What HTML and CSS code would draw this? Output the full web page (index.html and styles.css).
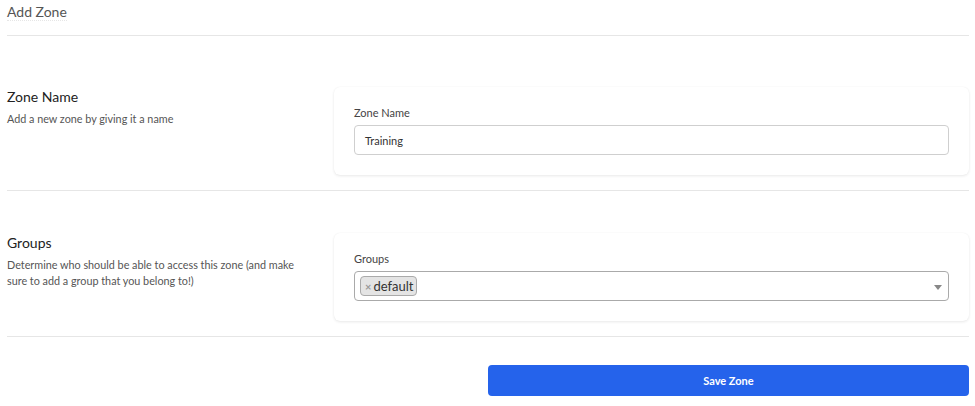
FILE: index.html
```html
<!DOCTYPE html>
<html>
<head>
<meta charset="utf-8">
<link rel="stylesheet" href="styles.css">
</head>
<body>
<div class="page">
  <div class="title-bar"><span class="title">Add Zone</span></div>
  <hr class="sep">
  <section class="row row-first">
    <div class="info">
      <h2 class="heading">Zone Name</h2>
      <p class="desc">Add a new zone by giving it a name</p>
    </div>
    <div class="card">
      <label class="label">Zone Name</label>
      <div class="input">Training</div>
    </div>
  </section>
  <hr class="sep">
  <section class="row">
    <div class="info">
      <h2 class="heading">Groups</h2>
      <p class="desc">Determine who should be able to access this zone (and make sure to add a group that you belong to!)</p>
    </div>
    <div class="card">
      <label class="label">Groups</label>
      <div class="select">
        <span class="tag"><span class="tag-x">×</span>default</span>
        <span class="arrow"></span>
      </div>
    </div>
  </section>
  <hr class="sep">
  <div class="actions">
    <div></div>
    <button class="btn">Save Zone</button>
  </div>
</div>
</body>
</html>
```

FILE: styles.css
```css
html, body {
  margin: 0;
  padding: 0;
  background: #fff;
}
body {
  font-family: Lato, "Open Sans", sans-serif;
  color: #222;
}
.page {
  padding: 0 6px 0 7px;
}
.title-bar {
  height: 35px;
  display: flex;
  align-items: flex-start;
  padding-top: 3px;
  box-sizing: border-box;
}
.title {
  font-size: 14px;
  line-height: 17px;
  color: #555;
  border-bottom: 1px dotted #e6e6e6;
}
.sep {
  border: 0;
  border-top: 1px solid #e6e6e6;
  margin: 0;
}
.row {
  display: grid;
  grid-template-columns: 327px 1fr;
  padding: 42px 0 15px;
}
.row-first {
  padding-top: 51px;
}
.info {
  padding-top: 1px;
}
.heading {
  margin: 0;
  font-size: 14px;
  line-height: 18px;
  font-weight: 400;
  color: #222;
}
.desc {
  margin: 5px 0 0;
  font-size: 10.8px;
  line-height: 16px;
  color: #555;
  max-width: 300px;
}
.card {
  background: #fff;
  border-radius: 6px;
  box-shadow: 0 1px 3px rgba(0,0,0,0.09), 0 0 1px rgba(0,0,0,0.05);
  padding: 18px 20px 20px 20px;
  height: 88px;
  box-sizing: border-box;
  display: flex;
  flex-direction: column;
}
.label {
  font-size: 11px;
  line-height: 16px;
  color: #444;
  margin-bottom: 4px;
}
.input {
  height: 31px;
  box-sizing: border-box;
  border: 1px solid #cfcfcf;
  border-radius: 4px;
  padding: 0 10px;
  display: flex;
  align-items: center;
  font-size: 11px;
  color: #333;
}
.select {
  position: relative;
  height: 31px;
  box-sizing: border-box;
  border: 1px solid #aaa;
  border-radius: 4px;
  padding: 0 5px;
  display: flex;
  align-items: center;
}
.tag {
  display: inline-flex;
  align-items: center;
  height: 20px;
  box-sizing: border-box;
  background: #e4e4e4;
  border: 1px solid #aaa;
  border-radius: 4px;
  padding: 0 3px 0 4px;
  font-size: 13px;
  color: #333;
}
.tag-x {
  color: #999;
  font-size: 11px;
  margin-right: 2px;
  font-weight: 700;
}
.arrow {
  position: absolute;
  right: 6px;
  top: 13px;
  width: 0;
  height: 0;
  border-left: 4px solid transparent;
  border-right: 4px solid transparent;
  border-top: 5px solid #888;
}
.actions {
  display: grid;
  grid-template-columns: 1fr 1fr;
  padding-top: 28px;
}
.btn {
  height: 31px;
  background: #2563eb;
  color: #fff;
  border: 0;
  border-radius: 4px;
  font-family: Lato, "Open Sans", sans-serif;
  font-size: 11px;
  font-weight: 700;
}
```
